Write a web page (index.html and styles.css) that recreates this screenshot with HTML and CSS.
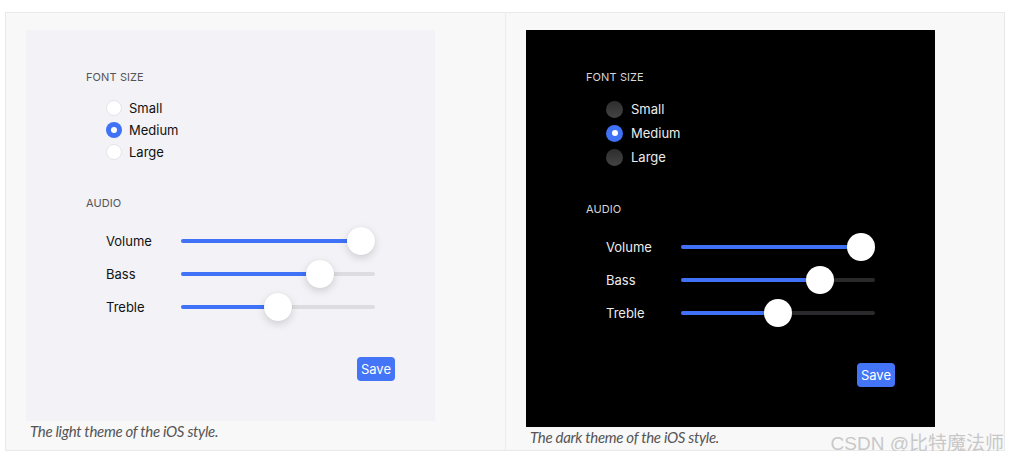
FILE: index.html
```html
<!DOCTYPE html>
<html lang="en">
<head>
<meta charset="utf-8">
<title>iOS style themes</title>
<link rel="stylesheet" href="styles.css">
</head>
<body>
<div class="frame">
  <figure class="cell cell-left">
    <div class="panel light">
      <div class="section-title">Font size</div>
      <div class="radios">
        <label class="radio"><span class="dot"></span><span>Small</span></label>
        <label class="radio checked"><span class="dot"></span><span>Medium</span></label>
        <label class="radio"><span class="dot"></span><span>Large</span></label>
      </div>
      <div class="section-title audio">Audio</div>
      <div class="sliders">
        <div class="slider-row"><span class="slider-label">Volume</span><div class="track" style="--v:1"><div class="fill"></div><span class="thumb"></span></div></div>
        <div class="slider-row"><span class="slider-label">Bass</span><div class="track" style="--v:0.75"><div class="fill"></div><span class="thumb"></span></div></div>
        <div class="slider-row"><span class="slider-label">Treble</span><div class="track" style="--v:0.5"><div class="fill"></div><span class="thumb"></span></div></div>
      </div>
      <div class="actions"><button class="save">Save</button></div>
    </div>
    <figcaption>The light theme of the iOS style.</figcaption>
  </figure>
  <figure class="cell cell-right">
    <div class="panel dark">
      <div class="section-title">Font size</div>
      <div class="radios">
        <label class="radio"><span class="dot"></span><span>Small</span></label>
        <label class="radio checked"><span class="dot"></span><span>Medium</span></label>
        <label class="radio"><span class="dot"></span><span>Large</span></label>
      </div>
      <div class="section-title audio">Audio</div>
      <div class="sliders">
        <div class="slider-row"><span class="slider-label">Volume</span><div class="track" style="--v:1"><div class="fill"></div><span class="thumb"></span></div></div>
        <div class="slider-row"><span class="slider-label">Bass</span><div class="track" style="--v:0.75"><div class="fill"></div><span class="thumb"></span></div></div>
        <div class="slider-row"><span class="slider-label">Treble</span><div class="track" style="--v:0.5"><div class="fill"></div><span class="thumb"></span></div></div>
      </div>
      <div class="actions"><button class="save">Save</button></div>
    </div>
    <figcaption>The dark theme of the iOS style.</figcaption>
  </figure>
  <div class="watermark">CSDN @比特魔法师</div>
</div>
</body>
</html>
```
FILE: styles.css
```css
html, body {
  margin: 0;
  padding: 0;
  background: #ffffff;
}
body {
  font-family: Inter, "Noto Sans", sans-serif;
}
.frame {
  position: relative;
  margin: 12px 5px 0 5px;
  width: 998px;
  height: 437px;
  border: 1px solid #e9e9e9;
  background: #f8f8f8;
  display: flex;
}
.cell {
  margin: 0;
  padding: 17px 0 0 20px;
  box-sizing: border-box;
}
.cell-left {
  width: 500px;
  flex: none;
  border-right: 1px solid #ececec;
}
.cell-right {
  flex: 1;
}
.panel {
  width: 409px;
  box-sizing: border-box;
  padding: 40px 60px 40px 60px;
}
.panel.light {
  background: #f2f2f7;
  color: #111;
}
.panel.dark {
  background: #000;
  color: #ececec;
}
.section-title {
  font-size: 11px;
  line-height: 14px;
  text-transform: uppercase;
  letter-spacing: 0.1px;
  color: #555;
}
.dark .section-title {
  color: #d6d6d6;
}
.section-title.audio {
  margin-top: 33px;
}
.radios {
  margin-top: 13px;
  padding-left: 20px;
  display: flex;
  flex-direction: column;
}
.radio {
  display: flex;
  align-items: center;
  gap: 7px;
  height: 22px;
  font-size: 13px;
}
.dark .radio {
  height: 24px;
  gap: 8px;
}
.dot {
  width: 16px;
  height: 16px;
  border-radius: 50%;
  box-sizing: border-box;
  background: #fff;
  border: 1px solid #e4e4ea;
  flex: none;
  display: flex;
  align-items: center;
  justify-content: center;
}
.dark .dot {
  width: 17px;
  height: 17px;
  border: none;
  background: linear-gradient(#2e2e2e, #444);
}
.radio.checked .dot {
  background: #3f72f6;
  border: none;
}
.radio.checked .dot::after {
  content: "";
  width: 6px;
  height: 6px;
  border-radius: 50%;
  background: #fff;
}
.sliders {
  margin-top: 14px;
  padding-left: 20px;
  display: flex;
  flex-direction: column;
}
.slider-row {
  height: 33px;
  display: flex;
  align-items: center;
  font-size: 13px;
}
.slider-label {
  width: 75px;
  flex: none;
}
.track {
  position: relative;
  flex: 1;
  height: 4px;
  border-radius: 2px;
  background: #dcdce1;
}
.dark .track {
  background: #2a2a2c;
}
.fill {
  height: 100%;
  width: calc(14px + (100% - 28px) * var(--v));
  border-radius: 2px;
  background: #3f72f6;
}
.thumb {
  position: absolute;
  top: 50%;
  left: calc(14px + (100% - 28px) * var(--v));
  width: 28px;
  height: 28px;
  border-radius: 50%;
  background: #fff;
  transform: translate(-50%, -50%);
  box-shadow: 0 3px 8px rgba(0, 0, 0, 0.15), 0 0 1px rgba(0, 0, 0, 0.1);
}
.actions {
  margin-top: 34px;
  margin-right: -20px;
  display: flex;
  justify-content: flex-end;
}
.save {
  font-family: Inter, "Noto Sans", sans-serif;
  font-size: 13px;
  height: 24px;
  padding: 0 4px;
  border: none;
  border-radius: 4px;
  background: #4475f6;
  color: #fff;
}
figcaption {
  font-family: Lato, "Open Sans", sans-serif;
  font-style: italic;
  font-size: 15px;
  letter-spacing: -0.3px;
  line-height: 20px;
  color: #555;
  padding-left: 4px;
}
.watermark {
  position: absolute;
  right: 0;
  bottom: -5px;
  font-family: "Liberation Sans", "Noto Sans CJK SC", sans-serif;
  font-size: 19px;
  color: #c8c8c8;
}
```
